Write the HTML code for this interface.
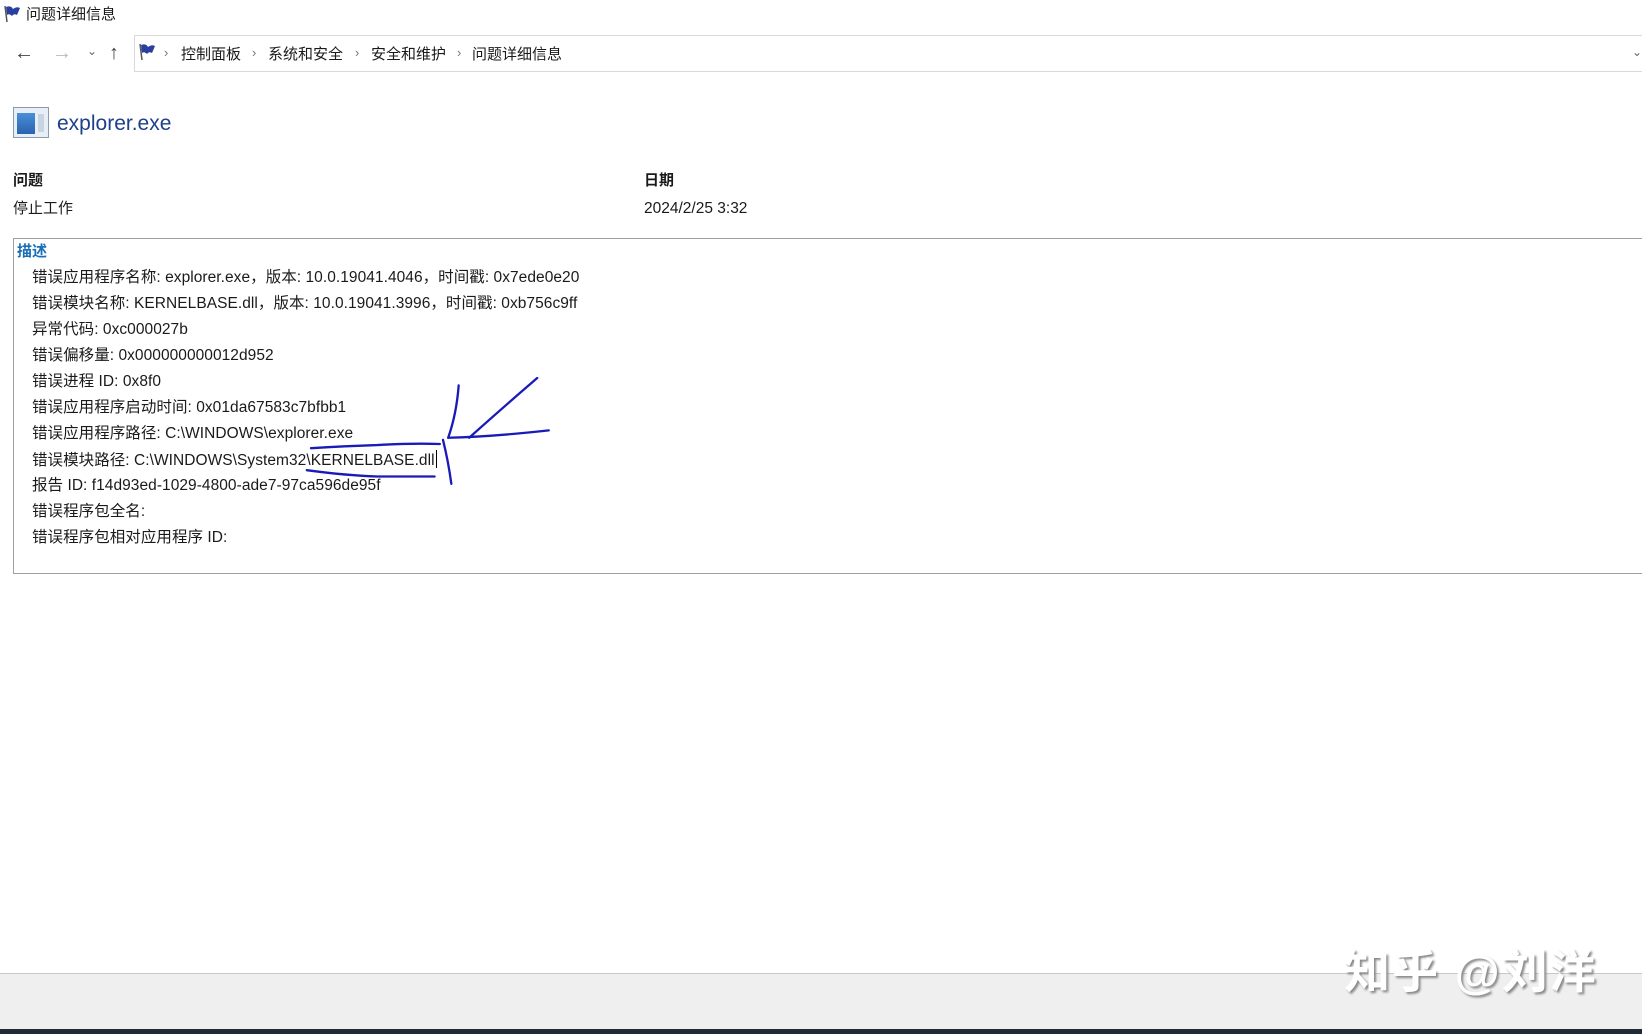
<!DOCTYPE html>
<html><head><meta charset="utf-8"><style>
html,body{margin:0;padding:0;width:1642px;height:1034px;overflow:hidden;background:#fff;position:relative;font-family:"Liberation Sans","Noto Sans CJK SC",sans-serif;color:#1a1a1a}
.a{position:absolute;white-space:nowrap}
.t{font-size:15px;line-height:20px}
.bc{font-size:15px;top:43px}
.l{left:32px;font-size:15.5px;line-height:20px;letter-spacing:0.05px}
</style></head><body>
<svg class="a" style="left:2px;top:4px" width="20" height="20" viewBox="0 0 20 20"><path d="M3 2 L5 18" stroke="#555" stroke-width="1.5"/><path d="M4 3 Q9 1 11 5 Q15 2 18 4 L15 11 Q12 9 10 12 Q7 9 5 11 Z" fill="#2b3fa0"/></svg>
<div class="a t" style="left:26px;top:5px">问题详细信息</div>
<div class="a" style="left:14px;top:42px;font-size:20px;color:#444">←</div>
<div class="a" style="left:52px;top:42px;font-size:20px;color:#bbb">→</div>
<div class="a" style="left:87px;top:44px;font-size:12px;color:#666">⌄</div>
<div class="a" style="left:109px;top:42px;font-size:20px;color:#444">↑</div>
<div class="a" style="left:134px;top:35px;width:1520px;height:37px;border:1px solid #d9d9d9;box-sizing:border-box"></div>
<svg class="a" style="left:137px;top:42px" width="20" height="20" viewBox="0 0 20 20"><path d="M3 2 L5 18" stroke="#555" stroke-width="1.5"/><path d="M4 3 Q9 1 11 5 Q15 2 18 4 L15 11 Q12 9 10 12 Q7 9 5 11 Z" fill="#2b3fa0"/></svg>
<div class="a bc" style="left:164px;color:#777;font-size:13px;top:45px">›</div>
<div class="a bc" style="left:181px">控制面板</div>
<div class="a bc" style="left:252px;color:#777;font-size:13px;top:45px">›</div>
<div class="a bc" style="left:268px">系统和安全</div>
<div class="a bc" style="left:355px;color:#777;font-size:13px;top:45px">›</div>
<div class="a bc" style="left:371px">安全和维护</div>
<div class="a bc" style="left:457px;color:#777;font-size:13px;top:45px">›</div>
<div class="a bc" style="left:472px">问题详细信息</div>
<div class="a" style="left:1632px;top:45px;font-size:12px;color:#666">⌄</div>
<div class="a" style="left:13px;top:107px;width:36px;height:31px;border:1px solid #8a9bb0;background:#e8eef5;box-sizing:border-box"><div style="position:absolute;left:3px;top:5px;width:18px;height:21px;background:linear-gradient(#4a8fd8,#2a62b0)"></div><div style="position:absolute;left:24px;top:6px;width:6px;height:18px;background:#c8d4e0"></div></div>
<div class="a" style="left:57px;top:112px;font-size:21px;color:#1e3f8a">explorer.exe</div>
<div class="a t" style="left:13px;top:171px;font-weight:bold">问题</div>
<div class="a t" style="left:644px;top:171px;font-weight:bold">日期</div>
<div class="a t" style="left:13px;top:199px">停止工作</div>
<div class="a t" style="left:644px;top:199px;font-size:15.5px">2024/2/25 3:32</div>
<div class="a" style="left:13px;top:238px;width:1640px;height:336px;border:1px solid #a0a0a0;box-sizing:border-box"></div>
<div class="a t" style="left:17px;top:242px;color:#1a6fb8;font-weight:bold">描述</div>
<div class="a l" style="top:268px">错误应用程序名称: explorer.exe，版本: 10.0.19041.4046，时间戳: 0x7ede0e20</div>
<div class="a l" style="top:294px">错误模块名称: KERNELBASE.dll，版本: 10.0.19041.3996，时间戳: 0xb756c9ff</div>
<div class="a l" style="top:320px">异常代码: 0xc000027b</div>
<div class="a l" style="top:346px">错误偏移量: 0x000000000012d952</div>
<div class="a l" style="top:372px">错误进程 ID: 0x8f0</div>
<div class="a l" style="top:398px">错误应用程序启动时间: 0x01da67583c7bfbb1</div>
<div class="a l" style="top:424px">错误应用程序路径: C:\WINDOWS\explorer.exe</div>
<div class="a l" style="top:450px">错误模块路径: C:\WINDOWS\System32\KERNELBASE.dll<span style="display:inline-block;width:1px;height:18px;background:#000;vertical-align:-3px;margin-left:1px"></span></div>
<div class="a l" style="top:476px">报告 ID: f14d93ed-1029-4800-ade7-97ca596de95f</div>
<div class="a l" style="top:502px">错误程序包全名:</div>
<div class="a l" style="top:528px">错误程序包相对应用程序 ID:</div>
<svg class="a" style="left:0;top:0" width="1642" height="1034"><g transform="scale(1.0472)" fill="none" stroke="#1a1ab8" stroke-width="2.2" stroke-linecap="round">
<path d="M297 428 Q330 426 360 425 Q395 423 420 424"/>
<path d="M293 449 Q330 454 360 455 Q395 455 415 455"/>
<path d="M423 420 Q428 440 431 462"/>
<path d="M438 368 Q436 395 428 418"/>
<path d="M428 418 Q470 417 524 411"/>
<path d="M448 418 Q485 385 513 361"/>
</g></svg>
<div class="a" style="left:0;top:973px;width:1642px;height:56px;background:#efefef;border-top:1px solid #c8c8c8"></div>
<div class="a" style="left:0;top:1029px;width:1642px;height:5px;background:#1e2a36"></div>
<div class="a" style="left:1344px;top:936px;font-size:46px;font-weight:bold;color:#fff;text-shadow:2px 2px 2px #888;letter-spacing:2px">知乎 @刘洋</div>
</body></html>
